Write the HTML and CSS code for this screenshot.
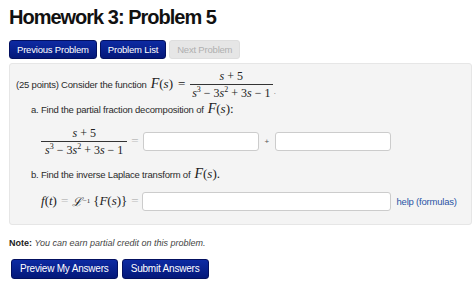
FILE: index.html
```html
<!DOCTYPE html>
<html>
<head>
<meta charset="utf-8">
<link rel="stylesheet" href="styles.css">
</head>
<body>
<h1 class="title">Homework 3: Problem 5</h1>
<div class="nav">
  <span class="btn">Previous Problem</span>
  <span class="btn">Problem List</span>
  <span class="btn disabled">Next Problem</span>
</div>
<div class="panel">
  <div class="row intro">
    <span class="txt">(25 points) Consider the function</span>
    <span class="math big">F</span><span class="mr">(</span><span class="math">s</span><span class="mr">)</span>
    <span class="eq">=</span>
    <span class="frac">
      <span class="num"><i>s</i> + 5</span>
      <span class="den"><i>s</i><sup>3</sup> − 3<i>s</i><sup>2</sup> + 3<i>s</i> − 1</span>
    </span>
    <span class="dot">.</span>
  </div>
  <div class="row parta">
    <span class="txt">a. Find the partial fraction decomposition of</span>
    <span class="math big">F</span><span class="mr">(</span><span class="math">s</span><span class="mr">):</span>
  </div>
  <div class="row eqa">
    <span class="frac">
      <span class="num"><i>s</i> + 5</span>
      <span class="den"><i>s</i><sup>3</sup> − 3<i>s</i><sup>2</sup> + 3<i>s</i> − 1</span>
    </span>
    <span class="eq light">=</span>
    <span class="input w1"></span>
    <span class="plus">+</span>
    <span class="input w1"></span>
  </div>
  <div class="row partb">
    <span class="txt">b. Find the inverse Laplace transform of</span>
    <span class="math big">F</span><span class="mr">(</span><span class="math">s</span><span class="mr">).</span>
  </div>
  <div class="row eqb">
    <span class="math">f</span><span class="mr">(</span><span class="math">t</span><span class="mr">)</span>
    <span class="eq light">=</span>
    <span class="cal">ℒ</span><sup class="inv">−1</sup>
    <span class="mr">{</span><span class="math">F</span><span class="mr">(</span><span class="math">s</span><span class="mr">)}</span>
    <span class="eq light">=</span>
    <span class="input w2"></span>
    <span class="help">help (formulas)</span>
  </div>
</div>
<p class="note"><b>Note:</b> <i>You can earn partial credit on this problem.</i></p>
<div class="actions">
  <span class="btn big">Preview My Answers</span>
  <span class="btn big">Submit Answers</span>
</div>
</body>
</html>
```

FILE: styles.css
```css
html, body {
  margin: 0;
  padding: 0;
  background: #fff;
}
body {
  font-family: "Liberation Sans", Arial, sans-serif;
  color: #222;
  padding: 0 0 0 9px;
}
.title {
  margin: 0;
  padding-top: 3px;
  font-size: 20px;
  line-height: 28px;
  font-weight: bold;
  color: #111;
  letter-spacing: -1px;
}
.nav {
  display: flex;
  gap: 3px;
  margin-top: 9px;
}
.btn {
  display: inline-block;
  box-sizing: border-box;
  font-size: 9.5px;
  line-height: 17px;
  height: 19px;
  padding: 0 7px;
  color: #fff;
  background: linear-gradient(#0d2aa3, #041879);
  border-radius: 3px;
  border: 1px solid #031060;
  letter-spacing: -0.2px;
  white-space: nowrap;
}
.btn.disabled {
  background: #e6e6e6;
  color: #b0b0b0;
  border-color: #dedede;
}
.panel {
  margin-top: 4px;
  width: 449px;
  background: #f4f4f4;
  border: 1px solid #e6e6e6;
  border-radius: 3px;
  padding: 4px 6px 13px 6px;
  font-size: 9.5px;
  letter-spacing: -0.2px;
  color: #2a2a2a;
}
.row {
  display: flex;
  align-items: center;
  white-space: nowrap;
}
.txt {
  margin-right: 4px;
}
.math {
  font-family: "Liberation Serif", "Times New Roman", serif;
  font-style: italic;
  font-size: 13px;
  color: #222;
  letter-spacing: 0;
}
.math.big {
  font-size: 14px;
}
.mr {
  font-family: "Liberation Serif", "Times New Roman", serif;
  font-size: 13px;
  color: #222;
  letter-spacing: 0;
}
.eq {
  font-family: "Liberation Serif", serif;
  font-size: 13px;
  margin: 0 5px;
  color: #222;
}
.eq.light {
  color: #bbb;
}
.frac {
  display: inline-flex;
  flex-direction: column;
  align-items: center;
  font-family: "Liberation Serif", "Times New Roman", serif;
  font-size: 12px;
  letter-spacing: 0;
  color: #222;
}
.frac .num {
  padding: 0 2px 1px;
  line-height: 14px;
}
.frac .den {
  border-top: 1px solid #333;
  padding: 1px 2px 0;
  line-height: 14px;
}
.frac sup {
  font-size: 8px;
  vertical-align: 5px;
  line-height: 0;
}
.dot {
  align-self: flex-end;
  margin-bottom: 4px;
  margin-left: 1px;
  color: #999;
}
.intro {
  height: 32px;
}
.parta {
  padding-left: 15px;
  height: 18px;
}
.eqa {
  margin-top: 7px;
  padding-left: 25px;
  height: 32px;
}
.eqa .frac .den {
  padding: 1px 4px 0;
}
.eqa .eq {
  margin: 0 4px;
}
.input {
  display: inline-block;
  height: 17px;
  background: #fff;
  border: 1px solid #ccc;
  border-radius: 3px;
}
.w1 {
  width: 114px;
}
.w2 {
  width: 247px;
}
.plus {
  margin: 0 6px;
  font-size: 8px;
  color: #555;
}
.partb {
  margin-top: 8px;
  padding-left: 15px;
  height: 18px;
}
.eqb {
  margin-top: 8px;
  padding-left: 25px;
  height: 20px;
}
.eqb .eq {
  margin: 0 4px;
}
.cal {
  font-family: "DejaVu Serif", serif;
  font-style: italic;
  font-size: 12px;
  color: #222;
  letter-spacing: 0;
}
.inv {
  font-family: "Liberation Serif", serif;
  font-size: 7px;
  vertical-align: 6px;
  margin: 0 3px 0 1px;
  line-height: 0;
}
.help {
  margin-left: 5px;
  color: #2b55a5;
}
.note {
  margin: 11px 0 0 0;
  font-size: 9px;
  line-height: 14px;
  color: #222;
}
.note i {
  color: #444;
}
.actions {
  display: flex;
  gap: 4px;
  margin-top: 9px;
  padding-left: 2px;
}
.btn.big {
  font-size: 10px;
  line-height: 18px;
  height: 20px;
  padding: 0 8px;
}
```
